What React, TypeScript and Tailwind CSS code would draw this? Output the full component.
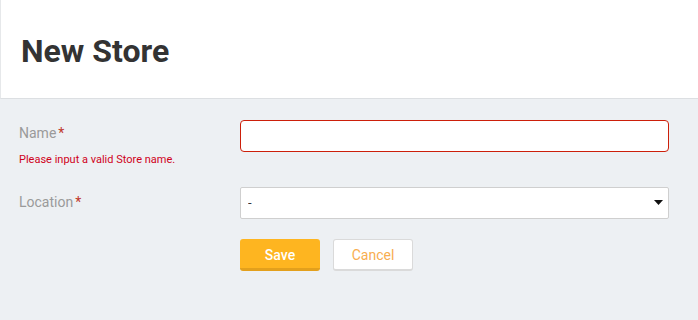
import { useState } from "react";

const App = () => {
  const [name, setName] = useState("");
  const [location, setLocation] = useState("-");

  return (
    <div className="min-h-[320px] w-full bg-[#edf0f3] font-['Roboto',sans-serif]">
      {/* Header */}
      <div className="h-[99px] border-b border-[#dcdfe2] border-l border-l-[#e6e8ea] bg-white px-5 pt-[31px]">
        <h1 className="text-[32px] font-bold leading-[40px] text-[#333333]">New Store</h1>
      </div>

      {/* Form */}
      <div className="px-[19px] pt-[21px]">
        <div className="flex items-start">
          <div className="w-[221px] pt-[3px] text-[14px] leading-[20px]">
            <label className="text-[#9a9a9a]">
              Name<span className="ml-[2px] text-[#c0392b]">*</span>
            </label>
            <p className="mt-[10px] text-[11px] leading-[14px] text-[#d0021b]">
              Please input a valid Store name.
            </p>
          </div>
          <input
            value={name}
            onChange={(e) => setName(e.target.value)}
            className="h-[32px] w-[429px] rounded-[4px] border border-[#cc1f0a] bg-white px-2 text-[13px] outline-none"
          />
        </div>

        <div className="mt-[20px] flex">
          <div className="w-[221px] pt-[5px] text-[14px] leading-[20px]">
            <label className="text-[#9a9a9a]">
              Location<span className="ml-[2px] text-[#c0392b]">*</span>
            </label>
          </div>
          <div className="relative w-[429px]">
            <select
              value={location}
              onChange={(e) => setLocation(e.target.value)}
              className="h-[32px] w-full appearance-none rounded-[2px] border border-[#cfcfcf] bg-white pl-[7px] text-[13px] text-[#333] outline-none"
            >
              <option value="-">-</option>
            </select>
            <svg
              className="pointer-events-none absolute right-[6px] top-[13px]"
              width="9"
              height="5"
              viewBox="0 0 9 5"
            >
              <path d="M0 0h9L4.5 5z" fill="#111" />
            </svg>
          </div>
        </div>

        <div className="ml-[221px] mt-[20px] flex gap-[13px]">
          <button className="h-[32px] w-[80px] rounded-[3px] border-b-[3px] border-[#e3a01c] bg-[#feb520] pt-[4px] text-[14px] font-medium text-white">
            Save
          </button>
          <button className="h-[32px] w-[80px] rounded-[3px] border border-[#dadada] border-b-[2px] bg-white pt-[1px] text-[14px] text-[#f8ad4f]">
            Cancel
          </button>
        </div>
      </div>
    </div>
  );
};

export default App;
